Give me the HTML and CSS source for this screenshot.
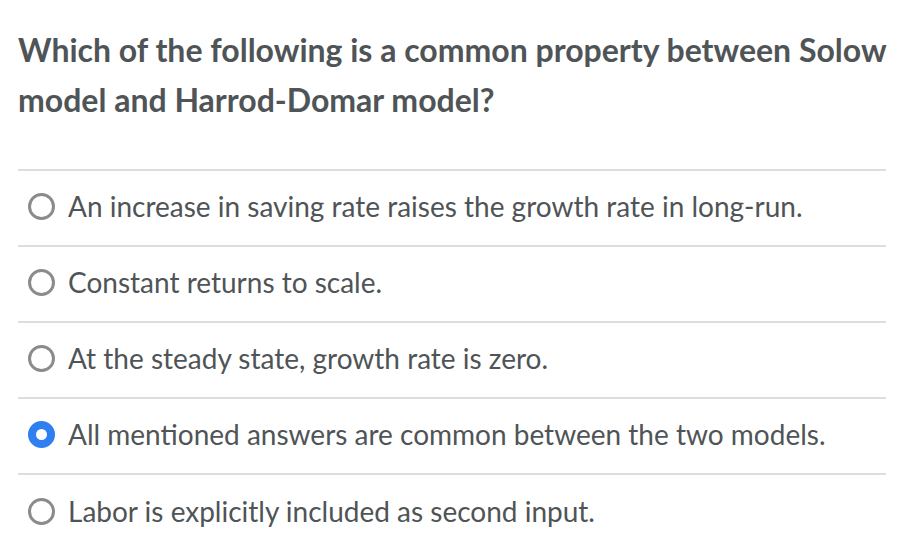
FILE: index.html
```html
<!DOCTYPE html>
<html>
<head>
<meta charset="utf-8">
<link rel="stylesheet" href="styles.css">
</head>
<body>
<div class="quiz">
  <div class="question">Which of the following is a common property between Solow model and Harrod-Domar model?</div>
  <ul class="answers">
    <li class="answer"><span class="radio"></span><span class="label">An increase in saving rate raises the growth rate in long-run.</span></li>
    <li class="answer"><span class="radio"></span><span class="label">Constant returns to scale.</span></li>
    <li class="answer"><span class="radio"></span><span class="label">At the steady state, growth rate is zero.</span></li>
    <li class="answer"><span class="radio checked"></span><span class="label">All mentioned answers are common between the two models.</span></li>
    <li class="answer"><span class="radio"></span><span class="label">Labor is explicitly included as second input.</span></li>
  </ul>
</div>
</body>
</html>
```
FILE: styles.css
```css
html, body {
  margin: 0;
  padding: 0;
  background: #ffffff;
}
.quiz {
  width: 868px;
  margin-left: 18px;
  font-family: Lato, "Open Sans", sans-serif;
  color: #4f5457;
}
.question {
  padding-top: 25px;
  font-size: 32px;
  font-weight: 700;
  line-height: 50px;
  height: 100px;
  margin-bottom: 44px;
}
.answers {
  list-style: none;
  margin: 0;
  padding: 0;
  border-top: 2px solid #dddddd;
}
.answer {
  box-sizing: border-box;
  display: flex;
  align-items: center;
  height: 76px;
  padding-bottom: 4px;
  border-bottom: 2px solid #dddddd;
  font-size: 28px;
}
.answer:last-child {
  border-bottom: none;
}
.label {
  line-height: 34px;
}
.radio {
  box-sizing: border-box;
  width: 27px;
  height: 27px;
  border-radius: 50%;
  border: 3px solid #8a8b8d;
  margin-left: 10px;
  margin-right: 13px;
  flex: none;
}
.radio.checked {
  border: 8px solid #2e7ff0;
  background: #ffffff;
}
```
